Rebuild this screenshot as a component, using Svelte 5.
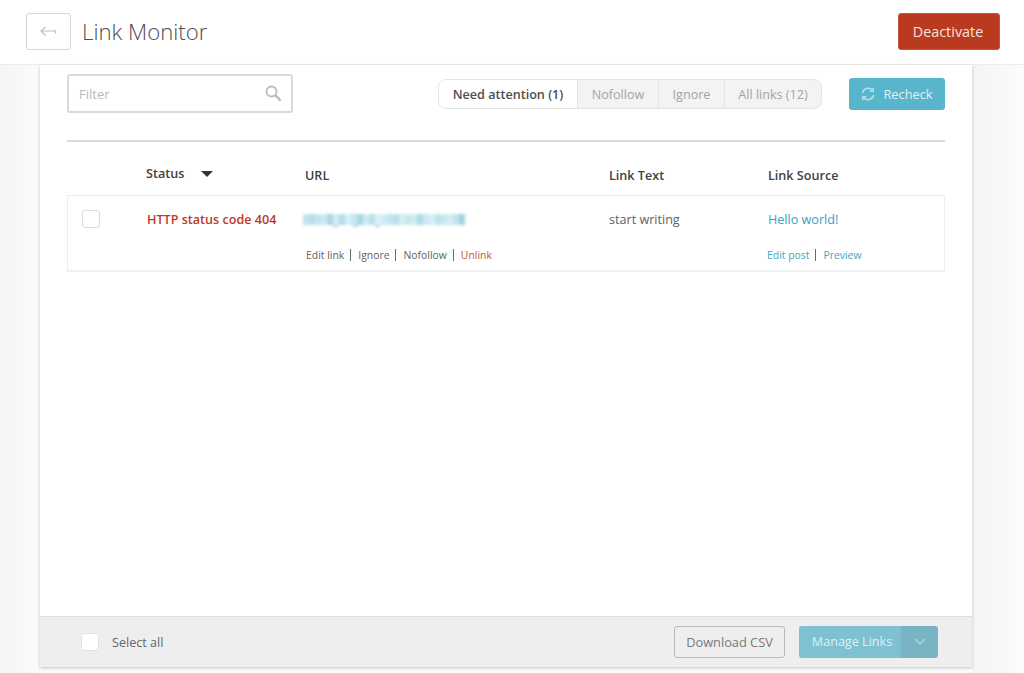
<script>
  const tabs = [
    { label: 'Need attention (1)', active: true, width: 138 },
    { label: 'Nofollow', width: 81 },
    { label: 'Ignore', width: 66 },
    { label: 'All links (12)', width: 97 }
  ];
  const shades = ['#bfe3ec', '#b6dfe9', '#c4e6ee', '#cbe9f0', '#a9d9e5', '#d3edf3', '#b3dde8', '#d7eff4', '#c6e7ee', '#a6d7e4', '#cdeaf1', '#b9e1ea', '#dcf1f5', '#cfebf1', '#c2e5ed', '#b7dfe9', '#d5eef3', '#c8e8ef', '#d0ecf2', '#aedbe6', '#cdeaf0', '#d9f0f4', '#bde2eb', '#c9e8ef', '#d2ecf2', '#c1e4ec', '#9fd4e2'];
  const blur = shades.map((color, i) => ({ left: i * 6, color }));
  const specks = [30, 50, 72];
</script>

<div class="page">
  <header class="topbar">
    <div class="title-group">
      <button class="back" aria-label="Back">
        <svg width="17" height="11" viewBox="0 0 17 11" fill="none" stroke="#bdbdbd" stroke-width="1.1">
          <path d="M5.5 1 1 5 5.5 9.5" />
          <path d="M1 5H15.5V7.5" />
        </svg>
      </button>
      <h1>Link Monitor</h1>
    </div>
    <button class="deactivate">Deactivate</button>
  </header>

  <main class="card">
    <div class="body">
      <div class="toolbar">
        <div class="filter">
          <span>Filter</span>
          <svg width="17" height="17" viewBox="0 0 17 17" fill="none" stroke="#bcbcbc" stroke-width="1.8">
            <circle cx="6.5" cy="6.5" r="5" />
            <path d="M10.2 10.2 15.6 15.6" stroke-width="2.4" />
          </svg>
        </div>
        <div class="right-tools">
          <div class="tabs">
            {#each tabs as tab}
              <button class="tab" class:active={tab.active} style="width:{tab.width}px">{tab.label}</button>
            {/each}
          </div>
          <button class="recheck">
            <svg width="14" height="14" viewBox="0 0 14 14" fill="none" stroke="#b4e0ea" stroke-width="1.5">
              <path d="M1.5 6A5.6 5.6 0 0 1 11.3 3.4" />
              <path d="M12.5 8A5.6 5.6 0 0 1 2.7 10.6" />
              <path d="M12.2 .8V4.3H8.8" />
              <path d="M1.8 13.2V9.7H5.2" />
            </svg>
            Recheck
          </button>
        </div>
      </div>

      <div class="rule"></div>

      <div class="grid head">
        <div class="status-head">Status <i class="caret"></i></div>
        <div class="col-url">URL</div>
        <div>Link Text</div>
        <div>Link Source</div>
      </div>

      <div class="row">
        <div class="grid row-main">
          <span class="check"></span>
          <div class="status">HTTP status code 404</div>
          <div class="url" aria-hidden="true">
            {#each blur as b}
              <i style="left:{b.left}px;background:{b.color}"></i>
            {/each}
            {#each specks as s}
              <u style="left:{s}px"></u>
            {/each}
          </div>
          <div class="link-text">start writing</div>
          <div class="source">Hello world!</div>
        </div>
        <div class="grid row-actions">
          <div class="actions">
            <span>Edit link</span><b></b><span>Ignore</span><b></b><span>Nofollow</span><b></b><span class="danger">Unlink</span>
          </div>
          <div class="actions blue">
            <span>Edit post</span><b></b><span>Preview</span>
          </div>
        </div>
      </div>
    </div>

    <footer class="footer">
      <label class="select-all"><span class="check white"></span>Select all</label>
      <div class="footer-actions">
        <button class="csv">Download CSV</button>
        <div class="manage">
          <span class="manage-label">Manage Links</span>
          <span class="manage-arrow">
            <svg width="12" height="7" viewBox="0 0 12 7" fill="none" stroke="#a9d2dc" stroke-width="1.6"><path d="M1 1l5 4.6L11 1" /></svg>
          </span>
        </div>
      </div>
    </footer>
  </main>
</div>

<style>
  :global(body) {
    margin: 0;
    font-family: "Open Sans", "Liberation Sans", sans-serif;
  }
  button {
    font-family: inherit;
    cursor: pointer;
  }
  .page {
    height: 673px;
    overflow: hidden;
    display: flex;
    flex-direction: column;
    background: linear-gradient(90deg, #f5f5f5 0, #fbfbfb 40px, #fbfbfb 972px, #f4f4f4 973px, #fcfcfc 1024px);
  }
  .topbar {
    box-sizing: border-box;
    height: 65px;
    flex: none;
    background: #fff;
    border-bottom: 1px solid #ececec;
    display: flex;
    justify-content: space-between;
    padding: 13px 24px 0 26px;
    align-items: flex-start;
  }
  .title-group {
    display: flex;
    align-items: center;
    gap: 11px;
  }
  .back {
    box-sizing: border-box;
    width: 45px;
    height: 37px;
    background: #fff;
    border: 1px solid #d6d6d6;
    border-radius: 3px;
    padding: 0;
    display: flex;
    align-items: center;
    justify-content: center;
  }
  h1 {
    margin: 0;
    font-size: 22.2px;
    line-height: 37px;
    font-weight: 300;
    color: #4c4e52;
  }
  .deactivate {
    box-sizing: border-box;
    width: 102px;
    height: 37px;
    background: #b93a1f;
    border: 1px solid #c4573f;
    border-radius: 3px;
    color: #f5e3de;
    font-size: 14.4px;
    padding: 0 2px 0 0;
  }
  .card {
    box-sizing: border-box;
    width: 932px;
    height: 602px;
    margin-left: 40px;
    background: #fff;
    display: flex;
    flex-direction: column;
    box-shadow: 0 1px 3px rgba(0, 0, 0, 0.22);
  }
  .body {
    flex: 1;
    padding: 9px 27px 0;
  }
  .toolbar {
    display: flex;
    justify-content: space-between;
    align-items: flex-start;
  }
  .filter {
    box-sizing: border-box;
    width: 226px;
    height: 39px;
    border: 2px solid #d9d9d9;
    border-radius: 3px;
    display: flex;
    align-items: center;
    justify-content: space-between;
    padding: 0 9px 0 10px;
    font-size: 13px;
    color: #b9b9b9;
  }
  .right-tools {
    display: flex;
    align-items: center;
    gap: 27px;
    margin-top: 4px;
  }
  .tabs {
    box-sizing: border-box;
    display: flex;
    height: 30px;
    width: 384px;
    border: 1px solid #e4e4e4;
    border-radius: 8px;
    overflow: hidden;
    background: #f3f3f3;
  }
  .tab {
    box-sizing: border-box;
    flex: none;
    border: 0;
    border-left: 1px solid #e4e4e4;
    background: transparent;
    font-size: 12.6px;
    color: #a4a4a4;
    padding: 1px 0 0;
    white-space: nowrap;
    line-height: 27px;
  }
  .tab.active {
    border-left: 0;
    background: #fff;
    color: #4c4e52;
    font-weight: 600;
  }
  .recheck {
    box-sizing: border-box;
    width: 96px;
    height: 32px;
    background: #59b5cb;
    border: 0;
    border-radius: 3px;
    color: #e2f2f6;
    font-size: 12.8px;
    display: flex;
    align-items: center;
    justify-content: center;
    gap: 8px;
    padding: 0;
  }
  .rule {
    height: 2px;
    background: #d9d9d9;
    margin-top: 27px;
  }
  .grid {
    display: grid;
    grid-template-columns: 79px 159px 304px 159px 1fr;
  }
  .head {
    height: 53px;
    font-size: 12.6px;
    font-weight: 600;
    color: #3f4144;
    padding-top: 25px;
    box-sizing: border-box;
    line-height: 18px;
  }
  .status-head {
    grid-column: 2;
    margin-top: -2px;
    display: flex;
    align-items: center;
    gap: 16px;
    height: 18px;
  }
  .caret {
    width: 0;
    height: 0;
    border-left: 6px solid transparent;
    border-right: 6px solid transparent;
    border-top: 6px solid #333;
    display: block;
    margin-left: 1px;
  }
  .row {
    box-sizing: border-box;
    height: 77px;
    border: 1px solid #ececec;
    border-bottom: 2px solid #f0f0f0;
  }
  .row-main {
    margin-left: -1px;
    padding-top: 14px;
    height: 39px;
    box-sizing: border-box;
    align-items: start;
    font-size: 12.6px;
    line-height: 20px;
  }
  .check {
    display: block;
    box-sizing: border-box;
    width: 18px;
    height: 18px;
    border: 1px solid #dcdcdc;
    border-radius: 3px;
    background: #fff;
    margin-left: 15px;
  }
  .status {
    font-weight: 600;
    color: #b93a1f;
    padding-left: 1px;
    white-space: nowrap;
  }
  .url {
    position: relative;
    height: 11px;
    width: 162px;
    margin-left: -2px;
    margin-top: 4px;
    overflow: visible;
    filter: blur(1.4px);
  }
  .url i {
    position: absolute;
    display: block;
    top: 0;
    width: 6px;
    height: 100%;
  }
  .url u {
    position: absolute;
    display: block;
    top: 11px;
    width: 5px;
    height: 2px;
    background: #a9d9e5;
  }
  .link-text {
    color: #5f6164;
  }
  .source {
    color: #2fa3bf;
  }
  .row-actions {
    margin-left: -1px;
    padding-top: 13px;
    font-size: 10.4px;
    line-height: 14px;
  }
  .actions {
    display: flex;
    align-items: center;
    color: #5f6164;
    white-space: nowrap;
  }
  .row-actions .actions:first-child {
    grid-column: 3;
    margin-left: 1px;
  }
  .row-actions .actions:last-child {
    grid-column: 5;
    margin-left: -1px;
  }
  .actions b {
    width: 1px;
    height: 12px;
    background: #6a6a6a;
    margin: 0 7px 0 6px;
  }
  .danger {
    color: #c9513a;
  }
  .blue {
    color: #3da6c0;
  }
  .footer {
    box-sizing: border-box;
    height: 51px;
    flex: none;
    background: #eeeeee;
    border-top: 1px solid #dedede;
    display: flex;
    align-items: center;
    justify-content: space-between;
    padding: 0 34px 0 41px;
  }
  .select-all {
    display: flex;
    align-items: center;
    gap: 13px;
    font-size: 12.6px;
    color: #65676a;
  }
  .select-all .check {
    margin: 0;
    border-color: #e2e2e2;
  }
  .footer-actions {
    display: flex;
    gap: 14px;
    align-items: center;
    margin-bottom: 1px;
  }
  .csv {
    box-sizing: border-box;
    width: 111px;
    height: 32px;
    background: transparent;
    border: 1px solid #b9b9b9;
    border-radius: 3px;
    color: #77797c;
    font-size: 12.8px;
    padding: 0;
  }
  .manage {
    display: flex;
    width: 139px;
    height: 32px;
    border-radius: 3px;
    overflow: hidden;
    font-size: 12.6px;
    color: #ddf0f4;
  }
  .manage-label {
    flex: 1;
    background: #80c1d1;
    line-height: 32px;
    text-align: center;
    padding-left: 4px;
  }
  .manage-arrow {
    width: 37px;
    background: #79b4c4;
    display: flex;
    align-items: center;
    justify-content: center;
  }
</style>
